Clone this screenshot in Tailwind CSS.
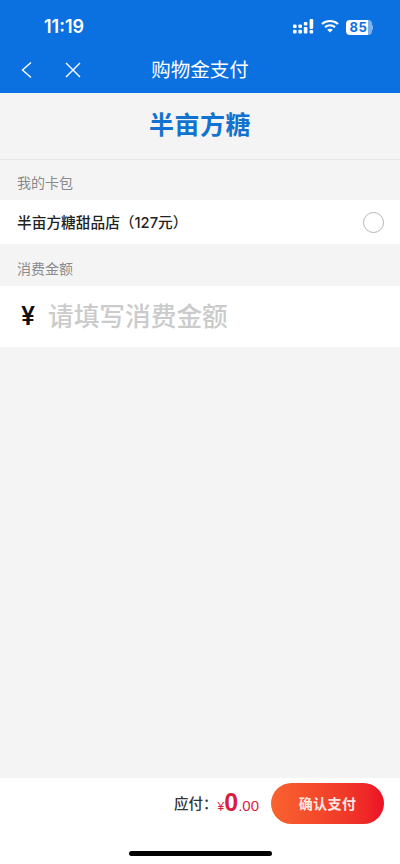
<!doctype html>
<html lang="zh">
<head>
<meta charset="utf-8">
<script src="https://cdn.jsdelivr.net/npm/@tailwindcss/browser@4"></script>
</head>
<body class="font-['Inter','Noto_Sans_CJK_SC',sans-serif]">
<div class="w-[400px] h-[864px] flex flex-col bg-[#f4f4f4] overflow-hidden">
  <!-- header -->
  <div class="h-[93px] shrink-0 bg-[#0b70e0] text-white">
    <div class="h-[48px] flex items-start justify-between pl-[44px] pr-[27px] pt-[16px]">
      <span class="text-[18px] leading-[22px] font-semibold">11:19</span>
      <div class="flex items-center gap-[7px] h-[22px]">
        <svg class="mb-[1px]" width="21" height="15" viewBox="0 0 21 15" fill="#fff">
          <rect x="0" y="5.5" width="3.6" height="3.6" rx="1"/><rect x="0" y="10.8" width="3.6" height="3.6" rx="1"/>
          <rect x="5.4" y="5.5" width="3.6" height="3.6" rx="1"/><rect x="5.4" y="10.8" width="3.6" height="3.6" rx="1"/>
          <rect x="10.8" y="3" width="3.6" height="3.6" rx="1"/><rect x="10.8" y="8" width="3.6" height="6.4" rx="1"/>
          <rect x="16.6" y="0" width="3.6" height="10" rx="1.2"/><rect x="16.6" y="11" width="3.6" height="3.4" rx="1"/>
        </svg>
        <svg class="mb-[2px]" width="18" height="14" viewBox="0 0 18 14" fill="none" stroke="#fff" stroke-width="2.2">
          <path d="M1 5 C5.5 1 12.5 1 17 5"/>
          <path d="M4 8.2 C7 5.6 11 5.6 14 8.2"/>
          <path d="M9 13.5 L6.2 10.7 C8 9.4 10 9.4 11.8 10.7 Z" fill="#fff" stroke="none"/>
        </svg>
        <div class="flex items-center">
          <div class="w-[26px] h-[15px] rounded-[4px] bg-[linear-gradient(90deg,#fff_84%,#7fb2ec_84%)] text-[#0b70e0] text-[13px] leading-[15px] font-bold text-center tracking-[0.5px]">85</div>
          <div class="w-[1.5px] h-[5px] rounded-r bg-[#7fb2ec]"></div>
        </div>
      </div>
    </div>
    <div class="relative h-[45px] flex items-center justify-center">
      <svg class="absolute left-[20px] top-[13px]" width="13" height="18" viewBox="0 0 13 18" fill="none" stroke="#fff" stroke-width="1.4"><path d="M11 1.5 L2.5 9 L11 16.5"/></svg>
      <svg class="absolute left-[64px] top-[13px]" width="18" height="18" viewBox="0 0 18 18" fill="none" stroke="#fff" stroke-width="1.4"><path d="M2 2 L16 16 M16 2 L2 16"/></svg>
      <span class="text-[19.5px] leading-[26px] pb-[1px]">购物金支付</span>
    </div>
  </div>
  <!-- merchant -->
  <div class="h-[67px] shrink-0 flex items-center justify-center border-b border-[#e8e8e8]">
    <span class="text-[#1272cf] text-[25px] font-semibold tracking-[0.5px] pb-[1px]">半亩方糖</span>
  </div>
  <!-- card section -->
  <div class="h-[40px] shrink-0 flex items-center px-[17px] pt-[4px] text-[14px] text-[#8a8a8a]">我的卡包</div>
  <div class="h-[44px] shrink-0 bg-white flex items-center justify-between pl-[17px] pr-[16px]">
    <span class="text-[14.7px] font-medium text-[#222] pt-[2px]">半亩方糖甜品店（127元）</span>
    <div class="w-[21px] h-[21px] rounded-full border border-[#b5b5b5]"></div>
  </div>
  <!-- amount -->
  <div class="h-[42px] shrink-0 flex items-center px-[17px] pt-[7px] text-[14px] text-[#8a8a8a]">消费金额</div>
  <div class="h-[61px] shrink-0 bg-white flex items-center pl-[21px]">
    <span class="w-[27px] text-[25px] font-semibold text-[#111] leading-none">¥</span>
    <span class="text-[25.7px] font-medium text-[#cbcbcb] pt-[2px]">请填写消费金额</span>
  </div>
  <div class="flex-1"></div>
  <!-- bottom bar -->
  <div class="relative h-[86px] shrink-0 bg-white flex items-start justify-end pt-[5px] pr-[16px]">
    <div class="flex items-center h-[41px] mr-[12px] pt-[1px] text-[14.5px] font-medium text-[#333]">
      <span>应付：</span>
      <span class="text-[#d81e3f] flex items-baseline font-['Liberation_Sans','Noto_Sans_CJK_SC',sans-serif]">
        <span class="text-[12px]">¥</span><span class="text-[25px] font-bold leading-none">0</span><span class="text-[15px]">.00</span>
      </span>
    </div>
    <div class="w-[113px] h-[41px] rounded-full bg-gradient-to-r from-[#f9622f] to-[#ec0f26] text-[#fde8e4] text-[14px] font-semibold flex items-center justify-center tracking-[0.4px]">确认支付</div>
    <div class="absolute left-[129px] bottom-[8px] w-[143px] h-[5px] rounded-full bg-black"></div>
  </div>
</div>
</body>
</html>
